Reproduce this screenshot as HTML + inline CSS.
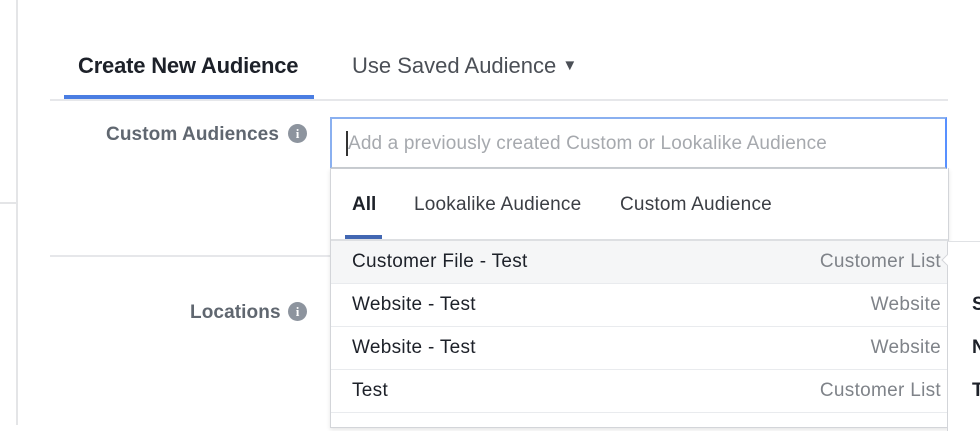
<!DOCTYPE html>
<html><head><style>
*{margin:0;padding:0;box-sizing:border-box}
body{width:980px;height:425px;overflow:hidden;background:#fff;font-family:"Liberation Sans",Helvetica,Arial,sans-serif;position:relative}
.a{position:absolute}
.info{display:inline-block;width:19px;height:19px;border-radius:50%;background:#8d949e;color:#fff;font:bold 13px/19px "Liberation Serif",serif;text-align:center}
.row{position:absolute;left:331px;width:616px;height:43px;border-bottom:1px solid #e9ebee;font-size:19px;letter-spacing:0.3px;color:#1d2129}
.row span{position:absolute;left:21px;top:10px}
.row i{position:absolute;right:6px;top:10px;font-style:normal;color:#7f8389}
</style></head><body>
<div class="a" style="left:16px;top:0;width:2px;height:425px;background:#e4e5e7"></div>
<div class="a" style="left:0;top:202px;width:16px;height:2px;background:#e4e5e7"></div>
<div class="a" style="left:50px;top:99px;width:898px;height:2px;background:#e6e7ea"></div>
<div class="a" style="left:50px;top:255px;width:281px;height:2px;background:#e6e7ea"></div>
<div class="a" style="left:78px;top:53px;font-size:22px;color:#1d2129;font-weight:bold;letter-spacing:-0.2px">Create New Audience</div>
<div class="a" style="left:64px;top:95px;width:250px;height:4px;background:#4a7de2"></div>
<div class="a" style="left:352px;top:53px;font-size:22px;color:#4b4f56">Use Saved Audience <span style="font-size:15px;vertical-align:3px">▼</span></div>
<div class="a" style="left:106px;top:124px;font-size:19px;letter-spacing:0.1px;font-weight:bold;color:#606770">Custom Audiences</div>
<div class="a info" style="left:288px;top:124px">i</div>
<div class="a" style="left:190px;top:302px;font-size:19px;letter-spacing:0.1px;font-weight:bold;color:#606770">Locations</div>
<div class="a info" style="left:288px;top:302px">i</div>
<div class="a" style="left:330px;top:117px;width:617px;height:52px;border:2px solid #5890ff;border-color:#8ab0f0 #5890ff #c9ccd1 #8ab0f0"></div>
<div class="a" style="left:346px;top:131px;width:2px;height:25px;background:#333"></div>
<div class="a" style="left:348px;top:133px;font-size:19px;letter-spacing:0.15px;color:#a6a9ae">Add a previously created Custom or Lookalike Audience</div>
<div class="a" style="left:330px;top:168px;width:619px;height:260px;border:1px solid #d3d5d9;border-top:none;box-shadow:0 2px 4px rgba(0,0,0,.1)"></div>
<div class="a" style="left:331px;top:239px;width:617px;height:2px;background:#dddfe2"></div>
<div class="a" style="left:352px;top:194px;font-size:19px;font-weight:bold;color:#1d2129">All</div>
<div class="a" style="left:345px;top:235px;width:37px;height:4px;background:#4267b2"></div>
<div class="a" style="left:414px;top:194px;font-size:19px;letter-spacing:0.2px;color:#3b3e44">Lookalike Audience</div>
<div class="a" style="left:620px;top:194px;font-size:19px;letter-spacing:0.2px;color:#3b3e44">Custom Audience</div>
<div class="row" style="top:241px;background:#f5f6f7"><span>Customer File - Test</span><i>Customer List</i></div>
<div class="row" style="top:284px"><span>Website - Test</span><i>Website</i></div>
<div class="row" style="top:327px"><span>Website - Test</span><i>Website</i></div>
<div class="row" style="top:370px"><span>Test</span><i>Customer List</i></div>
<div class="a" style="left:947px;top:241px;width:40px;height:190px;border-left:1px solid #d3d5d9;border-top:1px solid #e0e2e5;background:#fff"></div>
<div class="a" style="left:943px;top:256px;width:8px;height:8px;background:#fff;border-left:1px solid #d3d5d9;border-bottom:1px solid #d3d5d9;transform:rotate(45deg)"></div>
<div class="a" style="left:972px;top:294px;font-size:19px;font-weight:bold;color:#1d2129">S</div>
<div class="a" style="left:972px;top:337px;font-size:19px;font-weight:bold;color:#1d2129">N</div>
<div class="a" style="left:972px;top:380px;font-size:19px;font-weight:bold;color:#1d2129">T</div>
</body></html>
